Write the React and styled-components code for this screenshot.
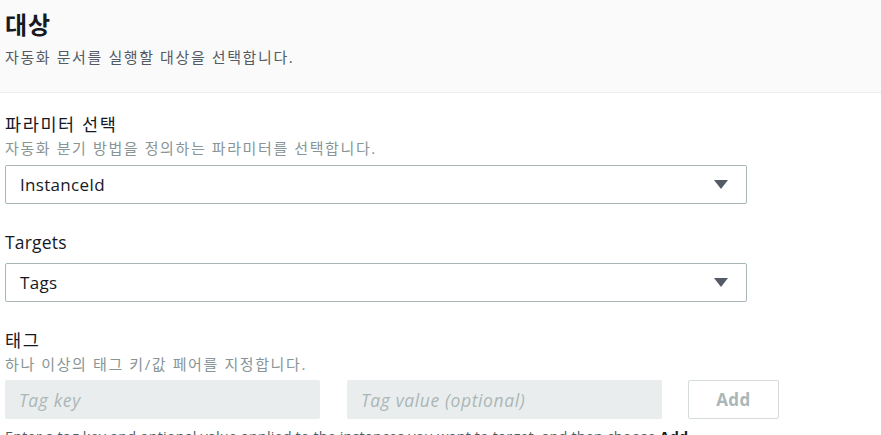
import styled, { createGlobalStyle } from "styled-components";

const Global = createGlobalStyle`
  html, body {
    margin: 0;
    padding: 0;
    background: #ffffff;
    font-family: "Open Sans", "Noto Sans CJK KR", sans-serif;
    color: #16191f;
  }
`;

const Page = styled.div`
  width: 881px;
  height: 435px;
  overflow: hidden;
`;

const Header = styled.header`
  background: #fafafa;
  border-bottom: 1px solid #eaeded;
  height: 93px;
  box-sizing: border-box;
  padding: 10px 5px 0 5px;

  h2 {
    margin: 0;
    font-size: 24px;
    line-height: 30px;
    font-weight: 700;
    letter-spacing: 1px;
    color: #16191f;
  }
  p {
    margin: 7px 0 0 0;
    font-size: 15px;
    line-height: 20px;
    letter-spacing: 1.6px;
    color: #545b64;
  }
`;

const Body = styled.div`
  padding: 20px 5px 0 5px;
`;

const Field = styled.div`
  margin-bottom: 27px;
`;

const Label = styled.div`
  font-size: 17.5px;
  line-height: 22px;
  color: #16191f;
  letter-spacing: ${(p) => (p.$ko ? "1.6px" : "0.2px")};
  margin-bottom: ${(p) => (p.$hasDesc ? "3px" : "10px")};
`;

const Desc = styled.div`
  font-size: 15px;
  line-height: 20px;
  letter-spacing: 1.6px;
  color: #879596;
  margin-bottom: ${(p) => p.$after ?? 7}px;
`;

const SelectBox = styled.div`
  width: 742px;
  height: 39px;
  box-sizing: border-box;
  border: 1px solid #aab7b8;
  border-radius: 2px;
  display: flex;
  align-items: center;
  justify-content: space-between;
  padding: 0 18px 0 14px;
  font-size: 17px;
  letter-spacing: 0.3px;
  color: #16191f;
`;

const Caret = styled.span`
  width: 0;
  height: 0;
  border-left: 7px solid transparent;
  border-right: 7px solid transparent;
  border-top: 9px solid #545b64;
`;

const TagRow = styled.div`
  display: flex;
  align-items: center;
`;

const TagInput = styled.div`
  width: 315px;
  height: 39px;
  box-sizing: border-box;
  background: #eaeded;
  border-radius: 2px;
  display: flex;
  align-items: center;
  padding-left: 14px;
  font-size: 17.5px;
  letter-spacing: 0.6px;
  font-style: italic;
  color: #aab7b8;
  margin-right: ${(p) => p.$gap}px;
`;

const AddButton = styled.button`
  width: 91px;
  height: 39px;
  box-sizing: border-box;
  border: 1px solid #d5dbdb;
  border-radius: 2px;
  background: #ffffff;
  font-family: inherit;
  font-size: 17px;
  letter-spacing: 0.5px;
  font-weight: 700;
  color: #aab7b8;
  padding: 0;
`;

const Hint = styled.p`
  margin: 8px 0 0 0;
  font-size: 14.5px;
  line-height: 20px;
  letter-spacing: 0.1px;
  color: #545b64;
  white-space: nowrap;

  b {
    color: #16191f;
  }
`;

export default function App() {
  return (
    <Page>
      <Global />
      <Header>
        <h2>대상</h2>
        <p>자동화 문서를 실행할 대상을 선택합니다.</p>
      </Header>
      <Body>
        <Field>
          <Label $ko $hasDesc>파라미터 선택</Label>
          <Desc>자동화 분기 방법을 정의하는 파라미터를 선택합니다.</Desc>
          <SelectBox>
            <span>InstanceId</span>
            <Caret />
          </SelectBox>
        </Field>
        <Field>
          <Label>Targets</Label>
          <SelectBox>
            <span>Tags</span>
            <Caret />
          </SelectBox>
        </Field>
        <div>
          <Label $ko $hasDesc>태그</Label>
          <Desc $after={6}>하나 이상의 태그 키/값 페어를 지정합니다.</Desc>
          <TagRow>
            <TagInput $gap={27}>Tag key</TagInput>
            <TagInput $gap={26}>Tag value (optional)</TagInput>
            <AddButton>Add</AddButton>
          </TagRow>
          <Hint>
            Enter a tag key and optional value applied to the instances you want to target, and then choose <b>Add</b>.
          </Hint>
        </div>
      </Body>
    </Page>
  );
}
